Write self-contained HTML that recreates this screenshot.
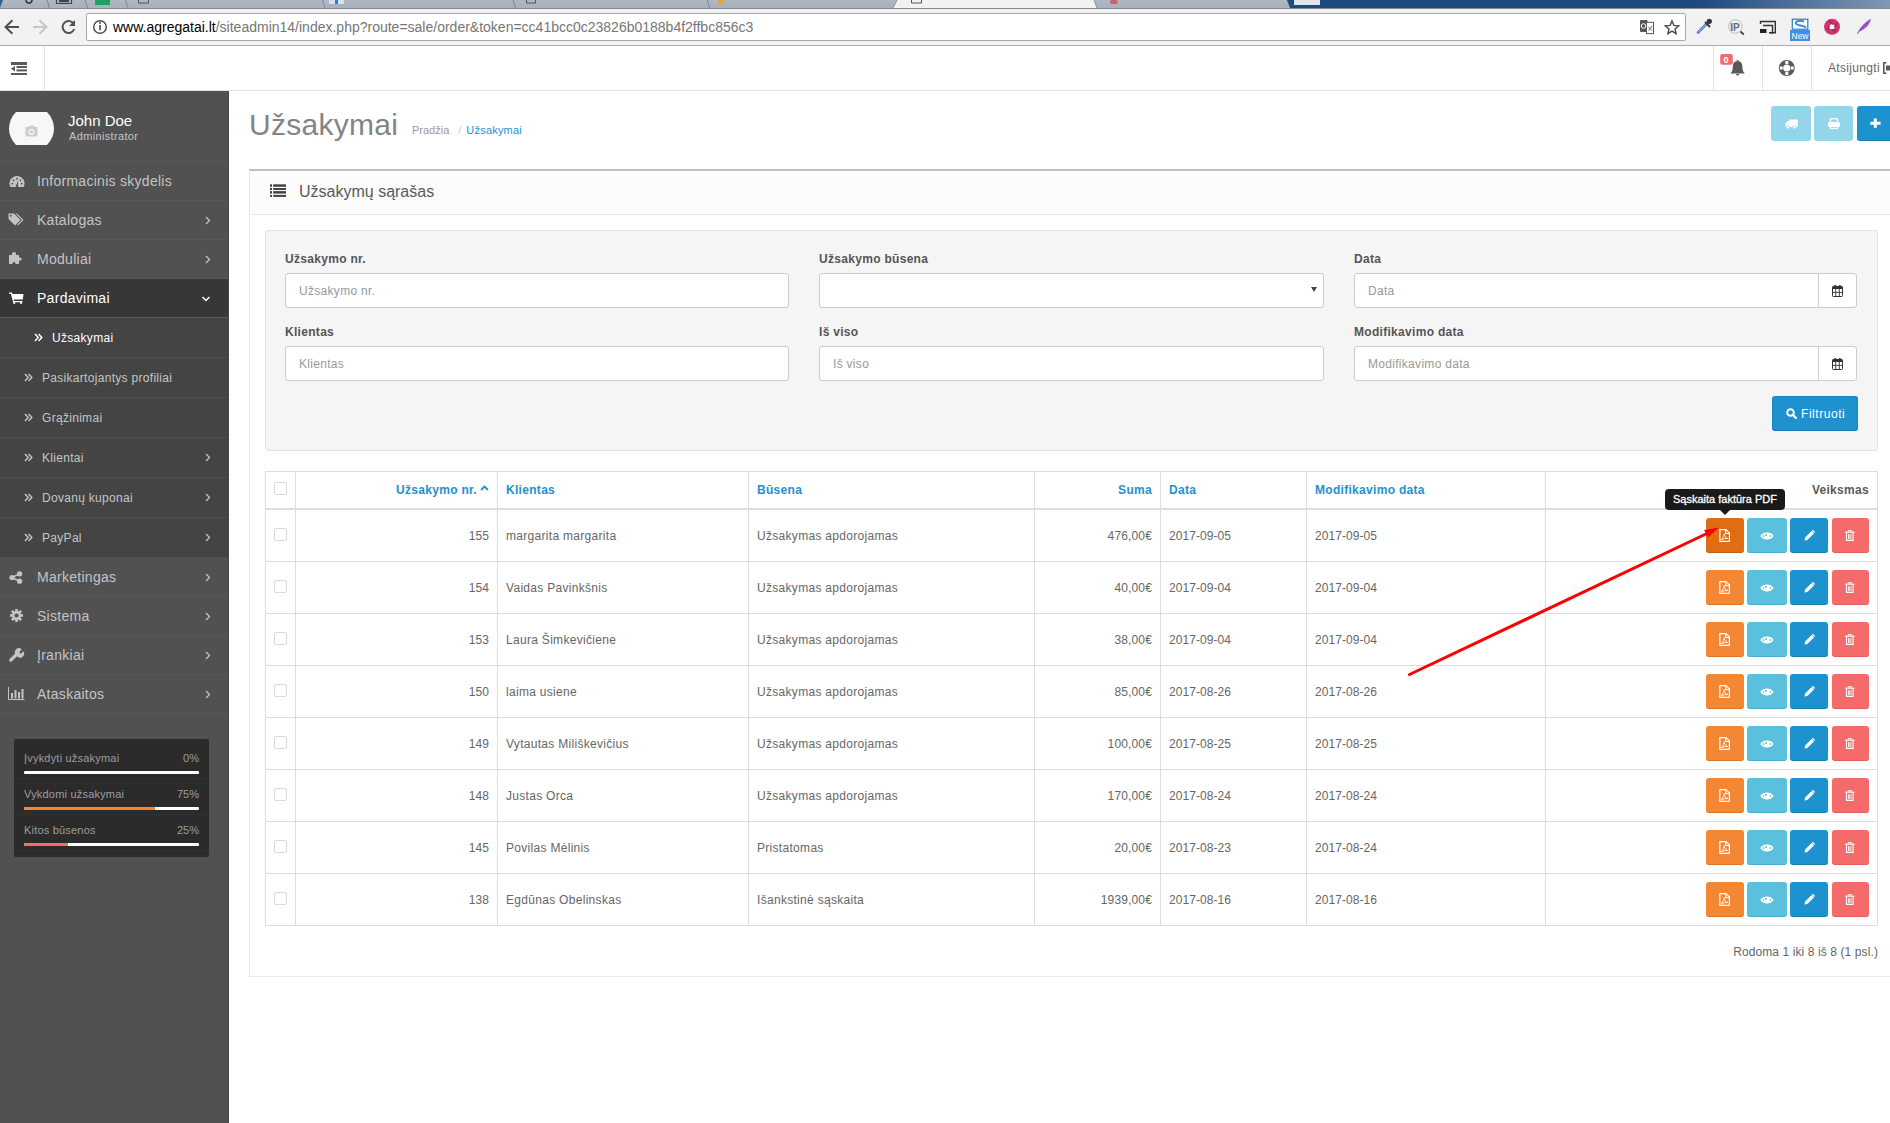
<!DOCTYPE html>
<html><head><meta charset="utf-8">
<style>
*{box-sizing:border-box;margin:0;padding:0}
html,body{width:1890px;height:1123px;overflow:hidden;background:#fff;font-family:"Liberation Sans",sans-serif;color:#666;font-size:12px}
.abs{position:absolute}
svg{display:block;overflow:visible}
.nw{white-space:nowrap}
#side{position:absolute;left:0;top:91px;width:229px;height:1032px;background:#515151}
.mi{position:absolute;left:0;width:229px;height:39px;border-bottom:1px solid #585858;color:#c4c4c4;font-size:14px;letter-spacing:0.28px}
.mi .t{position:absolute;left:37px;top:11px;line-height:17px;white-space:nowrap}
.si{position:absolute;left:0;width:229px;height:40px;background:#444;border-bottom:1px solid #4f4f4f;color:#c4c4c4;font-size:12px;letter-spacing:0.3px}
.si .t{position:absolute;left:42px;top:13px;line-height:15px;white-space:nowrap}
.td{position:absolute;white-space:nowrap;font-size:12px;line-height:14px;color:#666;letter-spacing:0.3px}
.th{position:absolute;white-space:nowrap;font-size:12px;line-height:14px;color:#1e91cf;font-weight:bold;letter-spacing:0.3px}
.lbl{position:absolute;white-space:nowrap;font-size:12px;line-height:14px;font-weight:bold;color:#555;letter-spacing:0.3px}
.inp{position:absolute;height:35px;background:#fff;border:1px solid #ccc;border-radius:3px}
.ph{position:absolute;white-space:nowrap;font-size:12px;line-height:14px;color:#999;letter-spacing:0.3px}
.btn{position:absolute;height:35px;border-radius:3px}
</style></head><body>

<svg class="abs" style="left:0;top:0" width="1890" height="9"><defs><linearGradient id="gr" x1="0" x2="1"><stop offset="0" stop-color="#1d4a80"/><stop offset="1" stop-color="#7f98b4"/></linearGradient></defs><rect x="0" y="0" width="1890" height="8" fill="#a9b2bd"/><rect x="0" y="0" width="1290" height="3" fill="#b3bbc5" opacity="0.6"/><path d="M1287 0 H1890 V8 H1290 Z" fill="#1d4a80"/><rect x="1700" y="0" width="190" height="8" fill="url(#gr)"/><path d="M0 0 H3 L0 8 Z" fill="#3a5f8f"/><path d="M47.0 0 L49.5 8" stroke="#7d8791" stroke-width="1"/><path d="M85.1 0 L87.6 8" stroke="#7d8791" stroke-width="1"/><path d="M125.5 0 L128 8" stroke="#7d8791" stroke-width="1"/><path d="M322.5 0 L325 8" stroke="#7d8791" stroke-width="1"/><path d="M513.0 0 L515.5 8" stroke="#7d8791" stroke-width="1"/><path d="M707.2 0 L709.7 8" stroke="#7d8791" stroke-width="1"/><path d="M897 0 H1094 L1097 8 H893 Z" fill="#f2f2f2"/><path d="M897 0 L893 8 M1094 0 L1097 8" stroke="#8a929b" stroke-width="1"/><rect x="1294" y="0" width="26" height="5" fill="#dfe5ec"/><circle cx="29" cy="0" r="3" fill="none" stroke="#333" stroke-width="1.5"/><path d="M56.5 0 V3.5 H71.5 V0" stroke="#444" stroke-width="1.2" fill="none"/><rect x="59" y="0" width="10" height="2.2" fill="#444"/><rect x="95" y="0" width="15" height="5" fill="#22a060"/><path d="M138.5 0 V3 H148.5 V0" stroke="#555" stroke-width="1" fill="none"/><path d="M526.5 0 V3 H535.5 V0" stroke="#555" stroke-width="1" fill="none"/><path d="M911.5 0 V3 H921.5 V0" stroke="#555" stroke-width="1" fill="none"/><rect x="329" y="0" width="15" height="4" fill="#d8e2ee"/><rect x="335" y="0" width="3" height="4" fill="#2f7fd0"/><rect x="718" y="0" width="6" height="4" rx="2" fill="#f0a030"/><rect x="1110" y="0" width="8" height="4" rx="2" fill="#d04040" opacity="0.7"/></svg>
<div class="abs" style="left:0;top:8px;width:1890px;height:1px;background:#838b95"></div>
<div class="abs" style="left:0;top:9px;width:1890px;height:36px;background:#f2f2f2"></div>
<div class="abs" style="left:0;top:45px;width:1890px;height:1px;background:#ababab"></div>
<div class="abs" style="left:86px;top:13px;width:1600px;height:28px;background:#fff;border:1px solid #a9a9a9;border-radius:2px"></div>
<div class="abs nw" style="left:113px;top:19px;font-size:14px;line-height:17px;color:#000">www.agregatai.lt<span style="color:#767676">/siteadmin14/index.php?route=sale/order&amp;token=cc41bcc0c23826b0188b4f2ffbc856c3</span></div>
<svg class="abs" style="left:0;top:0" width="1890" height="46"><path d="M5.5 27 H19 M12.4 20.3 L5.5 27 L12.4 33.7" stroke="#505050" stroke-width="2" fill="none"/><path d="M33 27 H46.5 M39.5 20.3 L46.5 27 L39.5 33.7" stroke="#c6c6c6" stroke-width="2" fill="none"/><path d="M74 24.5 A6 6 0 1 0 74.2 29" stroke="#505050" stroke-width="2" fill="none"/><path d="M75 20 V26 H69 Z" fill="#505050"/><circle cx="100" cy="27" r="6.3" stroke="#505050" stroke-width="1.5" fill="none"/><rect x="99.2" y="25" width="1.7" height="5.3" fill="#505050"/><circle cx="100" cy="22.9" r="1" fill="#505050"/><rect x="1640" y="20" width="7.5" height="12" rx="1" fill="#555"/><rect x="1646.5" y="22.3" width="7" height="11.3" fill="#fff" stroke="#555" stroke-width="1"/><circle cx="1643.6" cy="26" r="2.3" fill="none" stroke="#fff" stroke-width="1"/><path d="M1648 26.5 L1652 30.5 M1652 26 L1648.5 30.5" stroke="#555" stroke-width="0.9"/><polygon points="1672.00,21.00 1673.88,25.41 1678.66,25.84 1675.04,28.99 1676.11,33.66 1672.00,31.20 1667.89,33.66 1668.96,28.99 1665.34,25.84 1670.12,25.41" fill="none" stroke="#505050" stroke-width="1.5" stroke-linejoin="miter"/><path d="M1698 32.5 L1707 23.5" stroke="#4a6fd8" stroke-width="2.6" stroke-linecap="round"/><path d="M1698 32.5 L1707 23.5" stroke="#d8e0f8" stroke-width="0.8"/><circle cx="1709.3" cy="21.3" r="2.6" fill="#333"/><path d="M1705 22 L1710 27" stroke="#333" stroke-width="1.8"/><circle cx="1735.3" cy="26.4" r="6.7" fill="#f5f5f5" stroke="#c9ced3" stroke-width="1.4"/><text x="1730.3" y="30.5" font-family="Liberation Sans" font-weight="bold" font-size="10" fill="#666">IP</text><path d="M1740.5 31.5 L1743.8 34.5" stroke="#444" stroke-width="1.8"/><path d="M1760.5 24 V21.5 H1775.3 V32.8 H1769" stroke="#333" stroke-width="1.4" fill="none"/><path d="M1763 25.5 H1772.5 V32.8 H1770.5" stroke="#333" stroke-width="1.4" fill="none"/><rect x="1760" y="29" width="6.5" height="4" fill="#222"/><rect x="1792.3" y="19.2" width="15.5" height="10" fill="#fff" stroke="#2f7cc0" stroke-width="1.2"/><path d="M1804 21.5 C1800 20 1795 21 1796 23.5 C1797 26 1803 25 1806 27.5" stroke="#3a8ad0" stroke-width="2" fill="none"/><rect x="1790" y="30" width="20" height="11" fill="#3d8fe8"/><text x="1791.5" y="39" font-family="Liberation Sans" font-size="9" textLength="17" lengthAdjust="spacingAndGlyphs" fill="#fff">New</text><circle cx="1832" cy="26.8" r="8" fill="#d2326e"/><circle cx="1832" cy="26.8" r="2.6" fill="#fff"/><path d="M1829 21 L1833 24.5 M1837 23 L1834.5 27 M1836 31 L1831.5 29.5 M1827.5 29.5 L1829.5 25.5" stroke="#8a1a45" stroke-width="1"/><path d="M1857 34 C1860 27 1865 22 1871 18.7 C1870 24 1866 29 1859 31.5 Z" fill="#9b59d0"/><path d="M1857 34 L1868 22" stroke="#7a3fb8" stroke-width="0.8"/></svg>
<div class="abs" style="left:0;top:46px;width:1890px;height:45px;background:#fff;border-bottom:1px solid #e1e1e1"></div>
<div class="abs" style="left:44px;top:46px;width:1px;height:44px;background:#e1e1e1"></div>
<div class="abs" style="left:1713px;top:46px;width:1px;height:44px;background:#e1e1e1"></div>
<div class="abs" style="left:1762px;top:46px;width:1px;height:44px;background:#e1e1e1"></div>
<div class="abs" style="left:1811px;top:46px;width:1px;height:44px;background:#e1e1e1"></div>
<svg class="abs" style="left:0;top:0" width="1890" height="91"><rect x="11" y="62" width="16" height="3" fill="#595959"/><rect x="16.5" y="66" width="10.5" height="2" fill="#595959"/><rect x="16.5" y="69.4" width="10.5" height="2" fill="#595959"/><rect x="11" y="73" width="16" height="2" fill="#595959"/><path d="M15 66 V71.4 L11 68.7 Z" fill="#595959"/><path d="M1737.6 61 C1734 61 1732.8 64 1732.8 67 C1732.8 70.5 1731.5 72.5 1730.3 73.6 H1744.9 C1743.7 72.5 1742.4 70.5 1742.4 67 C1742.4 64 1741.2 61 1737.6 61 Z" fill="#595959"/><circle cx="1737.6" cy="60.6" r="0.9" fill="#595959"/><path d="M1736 74 A1.6 1.6 0 0 0 1739.2 74 Z" fill="#595959"/><rect x="1720.2" y="54" width="12.6" height="10.8" rx="2" fill="#f56b6b"/><text x="1723.6" y="62.6" font-family="Liberation Sans" font-weight="bold" font-size="9" fill="#fff">0</text><circle cx="1786.8" cy="68" r="5.8" stroke="#595959" stroke-width="4.4" fill="none"/><path d="M1786.8 61.1 V63.9 M1786.8 72.1 V74.9 M1779.9 68 H1782.7 M1790.9 68 H1793.7" stroke="#fff" stroke-width="3"/><path d="M1886.5 62.8 H1883.8 V73.2 H1886.5" stroke="#595959" stroke-width="1.6" fill="none"/><rect x="1886" y="65.5" width="4" height="5" fill="#595959"/></svg>
<div class="abs nw" style="left:1828px;top:61px;font-size:12px;line-height:15px;color:#666;letter-spacing:0.33px">Atsijungti</div>
<div id="side">
<div class="abs" style="left:0;top:0;width:229px;height:71px;border-bottom:1px solid #585858"></div>
<div class="abs" style="left:9px;top:21px;width:45px;height:33px;overflow:hidden"><div style="position:relative;left:0;top:-6px;width:45px;height:45px;border-radius:50%;background:#f7f7f7"></div></div>
<svg class="abs" style="left:25px;top:31.5px" width="13" height="16" viewBox="0 0 13 16"><path d="M0.5 4 H3.5 L4.5 2.5 H8.5 L9.5 4 H12.5 V13.5 H0.5 Z" fill="#cdcdcd"/><circle cx="6.5" cy="8.7" r="3" fill="#f7f7f7"/><circle cx="6.5" cy="8.7" r="1.8" fill="#cdcdcd"/></svg>
<div class="abs nw" style="left:68px;top:21px;font-size:15px;line-height:18px;color:#fff">John Doe</div>
<div class="abs nw" style="left:69px;top:39px;font-size:11px;line-height:13px;color:#c4c4c4;letter-spacing:0.35px">Administrator</div>
<div class="mi" style="top:71px;"><svg class="abs" style="left:9px;top:14px" width="16" height="12" viewBox="0 0 16 12"><path d="M1.37 11 A7.5 7.5 0 1 1 14.63 11 Z" fill="#c4c4c4"/><circle cx="3.3" cy="7.6" r="0.9" fill="#515151"/><circle cx="4.6" cy="4.3" r="0.9" fill="#515151"/><circle cx="8" cy="2.7" r="0.9" fill="#515151"/><circle cx="11.4" cy="4.3" r="0.9" fill="#515151"/><circle cx="12.7" cy="7.6" r="0.9" fill="#515151"/><path d="M7.2 9.8 L9.3 4.2 L8.8 10.2 Z" fill="#515151"/><circle cx="8" cy="9.8" r="1.3" fill="#515151"/></svg><div class="t">Informacinis skydelis</div></div>
<div class="mi" style="top:110px;"><svg class="abs" style="left:8px;top:12px" width="16" height="13" viewBox="0 0 16 13"><path d="M0.5 0.5 H6 L12.5 7 L7 12.5 L0.5 6 Z" fill="#c4c4c4"/><circle cx="2.8" cy="2.8" r="1" fill="#515151"/><path d="M7.5 0.5 H9 L15.5 7 L10 12.5 L9.2 11.7 L13.9 7 Z" fill="#c4c4c4"/></svg><div class="t">Katalogas</div><svg class="abs" style="left:205px;top:15px" width="6" height="9" viewBox="0 0 6 9"><path d="M1 1 L4.5 4.5 L1 8" stroke="#c4c4c4" stroke-width="1.3" fill="none"/></svg></div>
<div class="mi" style="top:149px;"><svg class="abs" style="left:9px;top:12px" width="15" height="12" viewBox="0 0 15 12"><path d="M0 3 H3 V2 A2 2 0 0 1 7 2 V3 H10 V5.5 H11 A1.6 1.6 0 0 1 11 8.7 H10 V12 H6.5 V11 A1.6 1.6 0 0 0 3.5 11 V12 H0 Z" fill="#c4c4c4"/></svg><div class="t">Moduliai</div><svg class="abs" style="left:205px;top:15px" width="6" height="9" viewBox="0 0 6 9"><path d="M1 1 L4.5 4.5 L1 8" stroke="#c4c4c4" stroke-width="1.3" fill="none"/></svg></div>
<div class="mi" style="top:188px;background:#373737;color:#fff;"><svg class="abs" style="left:9px;top:13px" width="15" height="12" viewBox="0 0 15 12"><path d="M0 0.5 H3 L3.6 2 H14.5 L13.8 7.5 H4.6 L5 9 H13.5 V10.2 H4.1 L1.9 1.7 H0 Z" fill="#ffffff"/><circle cx="5.2" cy="11" r="1.1" fill="#ffffff"/><circle cx="12" cy="11" r="1.1" fill="#ffffff"/></svg><div class="t">Pardavimai</div><svg class="abs" style="left:201px;top:17px" width="10" height="6" viewBox="0 0 10 6"><path d="M1.5 1 L5 4.5 L8.5 1" stroke="#fff" stroke-width="1.4" fill="none"/></svg></div>
<div class="si" style="top:227px"><svg class="abs" style="left:34px;top:15px" width="9" height="9" viewBox="0 0 9 9"><path d="M1 1 L4.2 4.5 L1 8 M4.6 1 L7.8 4.5 L4.6 8" stroke="#fff" stroke-width="1.5" fill="none"/></svg><div class="t" style="left:52px;color:#fff">Užsakymai</div></div>
<div class="si" style="top:267px"><svg class="abs" style="left:24px;top:15px" width="9" height="9" viewBox="0 0 9 9"><path d="M1 1 L4.2 4.5 L1 8 M4.6 1 L7.8 4.5 L4.6 8" stroke="#c4c4c4" stroke-width="1.5" fill="none"/></svg><div class="t">Pasikartojantys profiliai</div></div>
<div class="si" style="top:307px"><svg class="abs" style="left:24px;top:15px" width="9" height="9" viewBox="0 0 9 9"><path d="M1 1 L4.2 4.5 L1 8 M4.6 1 L7.8 4.5 L4.6 8" stroke="#c4c4c4" stroke-width="1.5" fill="none"/></svg><div class="t">Grąžinimai</div></div>
<div class="si" style="top:347px"><svg class="abs" style="left:24px;top:15px" width="9" height="9" viewBox="0 0 9 9"><path d="M1 1 L4.2 4.5 L1 8 M4.6 1 L7.8 4.5 L4.6 8" stroke="#c4c4c4" stroke-width="1.5" fill="none"/></svg><div class="t">Klientai</div><svg class="abs" style="left:205px;top:15px" width="6" height="9" viewBox="0 0 6 9"><path d="M1 1 L4.5 4.5 L1 8" stroke="#c4c4c4" stroke-width="1.3" fill="none"/></svg></div>
<div class="si" style="top:387px"><svg class="abs" style="left:24px;top:15px" width="9" height="9" viewBox="0 0 9 9"><path d="M1 1 L4.2 4.5 L1 8 M4.6 1 L7.8 4.5 L4.6 8" stroke="#c4c4c4" stroke-width="1.5" fill="none"/></svg><div class="t">Dovanų kuponai</div><svg class="abs" style="left:205px;top:15px" width="6" height="9" viewBox="0 0 6 9"><path d="M1 1 L4.5 4.5 L1 8" stroke="#c4c4c4" stroke-width="1.3" fill="none"/></svg></div>
<div class="si" style="top:427px"><svg class="abs" style="left:24px;top:15px" width="9" height="9" viewBox="0 0 9 9"><path d="M1 1 L4.2 4.5 L1 8 M4.6 1 L7.8 4.5 L4.6 8" stroke="#c4c4c4" stroke-width="1.5" fill="none"/></svg><div class="t">PayPal</div><svg class="abs" style="left:205px;top:15px" width="6" height="9" viewBox="0 0 6 9"><path d="M1 1 L4.5 4.5 L1 8" stroke="#c4c4c4" stroke-width="1.3" fill="none"/></svg></div>
<div class="mi" style="top:467px;"><svg class="abs" style="left:9px;top:13px" width="14" height="13" viewBox="0 0 14 13"><circle cx="3" cy="6.5" r="2.6" fill="#c4c4c4"/><circle cx="10.6" cy="2.8" r="2.6" fill="#c4c4c4"/><circle cx="10.6" cy="10.2" r="2.6" fill="#c4c4c4"/><path d="M3 6.5 L10.6 2.8 M3 6.5 L10.6 10.2" stroke="#c4c4c4" stroke-width="1.6"/></svg><div class="t">Marketingas</div><svg class="abs" style="left:205px;top:15px" width="6" height="9" viewBox="0 0 6 9"><path d="M1 1 L4.5 4.5 L1 8" stroke="#c4c4c4" stroke-width="1.3" fill="none"/></svg></div>
<div class="mi" style="top:506px;"><svg class="abs" style="left:10px;top:12px" width="13" height="13" viewBox="0 0 13 13"><rect x="5.2" y="0" width="2.6" height="3" fill="#c4c4c4" transform="rotate(0 6.5 6.5)"/><rect x="5.2" y="0" width="2.6" height="3" fill="#c4c4c4" transform="rotate(45 6.5 6.5)"/><rect x="5.2" y="0" width="2.6" height="3" fill="#c4c4c4" transform="rotate(90 6.5 6.5)"/><rect x="5.2" y="0" width="2.6" height="3" fill="#c4c4c4" transform="rotate(135 6.5 6.5)"/><rect x="5.2" y="0" width="2.6" height="3" fill="#c4c4c4" transform="rotate(180 6.5 6.5)"/><rect x="5.2" y="0" width="2.6" height="3" fill="#c4c4c4" transform="rotate(225 6.5 6.5)"/><rect x="5.2" y="0" width="2.6" height="3" fill="#c4c4c4" transform="rotate(270 6.5 6.5)"/><rect x="5.2" y="0" width="2.6" height="3" fill="#c4c4c4" transform="rotate(315 6.5 6.5)"/><circle cx="6.5" cy="6.5" r="4.6" fill="#c4c4c4"/><circle cx="6.5" cy="6.5" r="2" fill="#515151"/></svg><div class="t">Sistema</div><svg class="abs" style="left:205px;top:15px" width="6" height="9" viewBox="0 0 6 9"><path d="M1 1 L4.5 4.5 L1 8" stroke="#c4c4c4" stroke-width="1.3" fill="none"/></svg></div>
<div class="mi" style="top:545px;"><svg class="abs" style="left:9px;top:12px" width="14" height="14" viewBox="0 0 14 14"><path d="M1.8 12.2 L7.5 6.5" stroke="#c4c4c4" stroke-width="3.2" stroke-linecap="round"/><path d="M7 7 A3.8 3.8 0 0 1 12.8 1.5 L10.3 4 L10.8 5.2 L12 5.7 L14 3.2 A3.8 3.8 0 0 1 8.5 8.5 Z" fill="#c4c4c4"/></svg><div class="t">Įrankiai</div><svg class="abs" style="left:205px;top:15px" width="6" height="9" viewBox="0 0 6 9"><path d="M1 1 L4.5 4.5 L1 8" stroke="#c4c4c4" stroke-width="1.3" fill="none"/></svg></div>
<div class="mi" style="top:584px;"><svg class="abs" style="left:8px;top:12px" width="17" height="13" viewBox="0 0 17 13"><path d="M0.5 0 V12.5 H16.5" stroke="#c4c4c4" stroke-width="1" fill="none"/><rect x="3" y="6" width="2" height="5.5" fill="#c4c4c4"/><rect x="6.5" y="3" width="2" height="8.5" fill="#c4c4c4"/><rect x="10" y="5" width="2" height="6.5" fill="#c4c4c4"/><rect x="13.5" y="2" width="2" height="9.5" fill="#c4c4c4"/></svg><div class="t">Ataskaitos</div><svg class="abs" style="left:205px;top:15px" width="6" height="9" viewBox="0 0 6 9"><path d="M1 1 L4.5 4.5 L1 8" stroke="#c4c4c4" stroke-width="1.3" fill="none"/></svg></div>
<div class="abs" style="left:14px;top:648px;width:195px;height:118px;background:#2b2b2b;border-radius:2px"></div>
<div class="abs nw" style="left:24px;top:661px;font-size:11px;line-height:13px;color:#9d9d9d;letter-spacing:0.2px">Įvykdyti užsakymai</div>
<div class="abs nw" style="left:150px;width:49px;text-align:right;top:661px;font-size:11px;line-height:13px;color:#9d9d9d">0%</div>
<div class="abs" style="left:24px;top:680px;width:175px;height:3px;background:#fff;border-radius:1px;overflow:hidden"><div style="width:0%;height:3px;background:#fff"></div></div>
<div class="abs" style="left:14px;top:687px;width:195px;height:0;border-top:1px dotted #3a3a3a"></div>
<div class="abs nw" style="left:24px;top:697px;font-size:11px;line-height:13px;color:#9d9d9d;letter-spacing:0.2px">Vykdomi užsakymai</div>
<div class="abs nw" style="left:150px;width:49px;text-align:right;top:697px;font-size:11px;line-height:13px;color:#9d9d9d">75%</div>
<div class="abs" style="left:24px;top:716px;width:175px;height:3px;background:#fff;border-radius:1px;overflow:hidden"><div style="width:75%;height:3px;background:#f38733"></div></div>
<div class="abs" style="left:14px;top:723px;width:195px;height:0;border-top:1px dotted #3a3a3a"></div>
<div class="abs nw" style="left:24px;top:733px;font-size:11px;line-height:13px;color:#9d9d9d;letter-spacing:0.2px">Kitos būsenos</div>
<div class="abs nw" style="left:150px;width:49px;text-align:right;top:733px;font-size:11px;line-height:13px;color:#9d9d9d">25%</div>
<div class="abs" style="left:24px;top:752px;width:175px;height:3px;background:#fff;border-radius:1px;overflow:hidden"><div style="width:25%;height:3px;background:#f56b6b"></div></div>
<div class="abs" style="left:14px;top:759px;width:195px;height:0;border-top:1px dotted #3a3a3a"></div>
<div class="abs" style="left:228px;top:0;width:1px;height:1032px;background:#484848"></div>
</div>
<div class="abs nw" style="left:249px;top:107px;font-size:30px;line-height:36px;color:#848484;letter-spacing:0.27px">Užsakymai</div>
<div class="abs nw" style="left:412px;top:123px;font-size:11px;line-height:14px;color:#999">Pradžia<span style="color:#ccc;padding:0 5px 0 9px">/</span><span style="color:#1e91cf;letter-spacing:0.2px">Užsakymai</span></div>
<div class="btn" style="left:1771px;top:106px;width:40px;background:#94d6e9"></div>
<div class="btn" style="left:1814px;top:106px;width:39px;background:#94d6e9"></div>
<div class="btn" style="left:1857px;top:106px;width:40px;background:#1e91cf;border-bottom:1px solid #1a7fb5"></div>
<svg class="abs" style="left:0;top:0" width="1890" height="150"><path d="M1789 119.5 H1797.7 V127 H1785.4 V123.8 L1787.5 121 H1789 Z" fill="#fff"/><circle cx="1788" cy="127.3" r="1.7" fill="#fff" stroke="#94d6e9" stroke-width="0.8"/><circle cx="1794.5" cy="127.3" r="1.7" fill="#fff" stroke="#94d6e9" stroke-width="0.8"/><rect x="1830.5" y="118.8" width="7" height="4" fill="none" stroke="#fff" stroke-width="1.3"/><rect x="1828" y="122" width="12" height="5" rx="1.5" fill="#fff"/><rect x="1830.5" y="125.5" width="7" height="3" fill="none" stroke="#fff" stroke-width="1.2"/><path d="M1875.3 118.5 V127.8 M1870.3 123.2 H1880.6" stroke="#fff" stroke-width="3"/></svg>
<div class="abs" style="left:249px;top:169px;width:1700px;height:808px;border:1px solid #e8e8e8;border-top:2px solid #bfbfbf"></div>
<div class="abs" style="left:250px;top:171px;width:1700px;height:44px;background:#fcfcfc;border-bottom:1px solid #e8e8e8"></div>
<svg class="abs" style="left:270px;top:184px" width="17" height="13" viewBox="0 0 17 13"><rect x="0" y="0.3" width="2" height="2.5" fill="#444"/><rect x="3.2" y="0.3" width="12.8" height="2.5" fill="#444"/><rect x="0" y="4" width="2" height="2" fill="#444"/><rect x="3.2" y="4" width="12.8" height="2" fill="#444"/><rect x="0" y="7.1" width="2" height="2.5" fill="#444"/><rect x="3.2" y="7.1" width="12.8" height="2.5" fill="#444"/><rect x="0" y="10.9" width="2" height="2" fill="#444"/><rect x="3.2" y="10.9" width="12.8" height="2" fill="#444"/></svg>
<div class="abs nw" style="left:299px;top:183px;font-size:16px;line-height:18px;color:#595959">Užsakymų sąrašas</div>
<div class="abs" style="left:265px;top:230px;width:1613px;height:221px;background:#f5f5f5;border:1px solid #e3e3e3;border-radius:3px"></div>
<div class="lbl" style="left:285px;top:252px">Užsakymo nr.</div>
<div class="lbl" style="left:819px;top:252px">Užsakymo būsena</div>
<div class="lbl" style="left:1354px;top:252px">Data</div>
<div class="lbl" style="left:285px;top:325px">Klientas</div>
<div class="lbl" style="left:819px;top:325px">Iš viso</div>
<div class="lbl" style="left:1354px;top:325px">Modifikavimo data</div>
<div class="inp" style="left:285px;top:273px;width:504px"></div>
<div class="ph" style="left:299px;top:284px">Užsakymo nr.</div>
<div class="inp" style="left:819px;top:273px;width:505px"></div>
<div class="abs" style="left:1311px;top:287px;width:0;height:0;border-left:3px solid transparent;border-right:3px solid transparent;border-top:5px solid #444"></div>
<div class="inp" style="left:1354px;top:273px;width:503px"></div>
<div class="ph" style="left:1368px;top:284px">Data</div>
<div class="abs" style="left:1818px;top:273px;width:1px;height:35px;background:#ccc"></div>
<svg class="abs" style="left:1832px;top:285px" width="11" height="12" viewBox="0 0 11 12"><rect x="0.5" y="1.5" width="10" height="10" rx="0.8" fill="none" stroke="#333" stroke-width="1"/><rect x="0.5" y="1.5" width="10" height="2.5" fill="#333"/><rect x="2.3" y="0" width="1.6" height="2.5" fill="#333"/><rect x="7.1" y="0" width="1.6" height="2.5" fill="#333"/><path d="M3.7 4 V11 M7.3 4 V11 M0.5 7.4 H10.5" stroke="#333" stroke-width="0.9"/></svg>
<div class="inp" style="left:285px;top:346px;width:504px"></div>
<div class="ph" style="left:299px;top:357px">Klientas</div>
<div class="inp" style="left:819px;top:346px;width:505px"></div>
<div class="ph" style="left:833px;top:357px">Iš viso</div>
<div class="inp" style="left:1354px;top:346px;width:503px"></div>
<div class="ph" style="left:1368px;top:357px">Modifikavimo data</div>
<div class="abs" style="left:1818px;top:346px;width:1px;height:35px;background:#ccc"></div>
<svg class="abs" style="left:1832px;top:358px" width="11" height="12" viewBox="0 0 11 12"><rect x="0.5" y="1.5" width="10" height="10" rx="0.8" fill="none" stroke="#333" stroke-width="1"/><rect x="0.5" y="1.5" width="10" height="2.5" fill="#333"/><rect x="2.3" y="0" width="1.6" height="2.5" fill="#333"/><rect x="7.1" y="0" width="1.6" height="2.5" fill="#333"/><path d="M3.7 4 V11 M7.3 4 V11 M0.5 7.4 H10.5" stroke="#333" stroke-width="0.9"/></svg>
<div class="btn" style="left:1772px;top:396px;width:86px;background:#1e91cf;border:1px solid #1a86c0;border-bottom-color:#1878ad"></div>
<svg class="abs" style="left:1786px;top:408px" width="11" height="11" viewBox="0 0 11 11"><circle cx="4.5" cy="4.5" r="3.3" fill="none" stroke="#fff" stroke-width="1.9"/><path d="M7 7 L10 10" stroke="#fff" stroke-width="2.2" stroke-linecap="round"/></svg>
<div class="abs nw" style="left:1801px;top:407px;font-size:12px;line-height:14px;color:#fff;letter-spacing:0.55px">Filtruoti</div>
<div class="abs" style="left:265px;top:471px;width:1613px;height:455px;border:1px solid #ddd"></div>
<div class="abs" style="left:295px;top:471px;width:1px;height:455px;background:#ddd"></div>
<div class="abs" style="left:497px;top:471px;width:1px;height:455px;background:#ddd"></div>
<div class="abs" style="left:748px;top:471px;width:1px;height:455px;background:#ddd"></div>
<div class="abs" style="left:1034px;top:471px;width:1px;height:455px;background:#ddd"></div>
<div class="abs" style="left:1160px;top:471px;width:1px;height:455px;background:#ddd"></div>
<div class="abs" style="left:1306px;top:471px;width:1px;height:455px;background:#ddd"></div>
<div class="abs" style="left:1545px;top:471px;width:1px;height:455px;background:#ddd"></div>
<div class="abs" style="left:265px;top:508px;width:1613px;height:2px;background:#ddd"></div>
<div class="abs" style="left:265px;top:561px;width:1613px;height:1px;background:#ddd"></div>
<div class="abs" style="left:265px;top:613px;width:1613px;height:1px;background:#ddd"></div>
<div class="abs" style="left:265px;top:665px;width:1613px;height:1px;background:#ddd"></div>
<div class="abs" style="left:265px;top:717px;width:1613px;height:1px;background:#ddd"></div>
<div class="abs" style="left:265px;top:769px;width:1613px;height:1px;background:#ddd"></div>
<div class="abs" style="left:265px;top:821px;width:1613px;height:1px;background:#ddd"></div>
<div class="abs" style="left:265px;top:873px;width:1613px;height:1px;background:#ddd"></div>
<div class="abs" style="left:274px;top:482px;width:13px;height:13px;border:1px solid #d9d9d9;border-radius:2px;background:#fff"></div>
<div class="th" style="right:1413px;top:483px">Užsakymo nr.</div>
<div class="th" style="left:506px;top:483px">Klientas</div>
<div class="th" style="left:757px;top:483px">Būsena</div>
<div class="th" style="right:738px;top:483px">Suma</div>
<div class="th" style="left:1169px;top:483px">Data</div>
<div class="th" style="left:1315px;top:483px">Modifikavimo data</div>
<svg class="abs" style="left:480px;top:485px" width="9" height="6" viewBox="0 0 9 6"><path d="M1 5 L4.5 1.5 L8 5" stroke="#1e91cf" stroke-width="1.8" fill="none"/></svg>
<div class="th" style="right:21px;top:483px;color:#5a5a5a">Veiksmas</div>
<div class="abs" style="left:274px;top:528px;width:13px;height:13px;border:1px solid #d9d9d9;border-radius:2px;background:#fff"></div>
<div class="td" style="right:1401px;top:529px;letter-spacing:0.1px">155</div>
<div class="td" style="left:506px;top:529px">margarita margarita</div>
<div class="td" style="left:757px;top:529px">Užsakymas apdorojamas</div>
<div class="td" style="right:738px;top:529px;letter-spacing:0.15px">476,00€</div>
<div class="td" style="left:1169px;top:529px;letter-spacing:0.05px">2017-09-05</div>
<div class="td" style="left:1315px;top:529px;letter-spacing:0.05px">2017-09-05</div>
<div class="btn" style="left:1706px;top:518px;width:38px;background:#e06d12;border-bottom:1px solid #c85f0c"></div>
<div class="btn" style="left:1747px;top:518px;width:40px;background:#5bc0de;border-bottom:1px solid #46b0d2"></div>
<div class="btn" style="left:1790px;top:518px;width:38px;background:#1e91cf;border-bottom:1px solid #1a7db5"></div>
<div class="btn" style="left:1832px;top:518px;width:37px;background:#f56b6b;border-bottom:1px solid #e65a5a"></div>
<svg class="abs" style="left:1719px;top:529px" width="12" height="13" viewBox="0 0 12 13"><path d="M0.9 0.7 H7 L10.4 4.1 V12.3 H0.9 Z M6.6 0.7 V4.5 H10.4" stroke="#fff" stroke-width="1.2" fill="none"/><path d="M2.3 10.8 C3.8 9 5.2 6.5 5.2 4.8 C5.2 7 6.6 8.8 8.9 9.5 C6.8 9.2 4.4 9.8 2.3 10.8 Z" stroke="#fff" stroke-width="0.9" fill="none"/></svg>
<svg class="abs" style="left:1760px;top:531px" width="14" height="10" viewBox="0 0 14 10"><path d="M0.3 5 C3 0.4 11 0.4 13.7 5 C11 9.6 3 9.6 0.3 5 Z" fill="#fff"/><path d="M2.3 5 C4.5 2.7 9.5 2.7 11.7 5 C9.5 7.3 4.5 7.3 2.3 5 Z" fill="#5bc0de"/><circle cx="7" cy="5" r="3" fill="#fff"/><circle cx="5.9" cy="3.9" r="1" fill="#5bc0de"/></svg>
<svg class="abs" style="left:1804px;top:530px" width="12" height="11" viewBox="0 0 12 11"><path d="M0.5 10.5 L1.1 7.6 L7.6 1.1 L9.9 3.4 L3.4 9.9 Z" fill="#fff"/><path d="M8.4 0.3 L10.7 2.6" stroke="#fff" stroke-width="1.4"/></svg>
<svg class="abs" style="left:1845px;top:530px" width="10" height="11" viewBox="0 0 10 11"><path d="M0 2.2 H9.6" stroke="#fff" stroke-width="1.1"/><path d="M3.3 2.2 V0.6 H6.3 V2.2" stroke="#fff" stroke-width="1" fill="none"/><path d="M1.5 2.6 V10.4 H8.1 V2.6" stroke="#fff" stroke-width="1.1" fill="none"/><path d="M3.5 4.2 V9 M4.8 4.2 V9 M6.1 4.2 V9" stroke="#fff" stroke-width="0.8"/></svg>
<div class="abs" style="left:274px;top:580px;width:13px;height:13px;border:1px solid #d9d9d9;border-radius:2px;background:#fff"></div>
<div class="td" style="right:1401px;top:581px;letter-spacing:0.1px">154</div>
<div class="td" style="left:506px;top:581px">Vaidas Pavinkšnis</div>
<div class="td" style="left:757px;top:581px">Užsakymas apdorojamas</div>
<div class="td" style="right:738px;top:581px;letter-spacing:0.15px">40,00€</div>
<div class="td" style="left:1169px;top:581px;letter-spacing:0.05px">2017-09-04</div>
<div class="td" style="left:1315px;top:581px;letter-spacing:0.05px">2017-09-04</div>
<div class="btn" style="left:1706px;top:570px;width:38px;background:#f38733;border-bottom:1px solid #e0731f"></div>
<div class="btn" style="left:1747px;top:570px;width:40px;background:#5bc0de;border-bottom:1px solid #46b0d2"></div>
<div class="btn" style="left:1790px;top:570px;width:38px;background:#1e91cf;border-bottom:1px solid #1a7db5"></div>
<div class="btn" style="left:1832px;top:570px;width:37px;background:#f56b6b;border-bottom:1px solid #e65a5a"></div>
<svg class="abs" style="left:1719px;top:581px" width="12" height="13" viewBox="0 0 12 13"><path d="M0.9 0.7 H7 L10.4 4.1 V12.3 H0.9 Z M6.6 0.7 V4.5 H10.4" stroke="#fff" stroke-width="1.2" fill="none"/><path d="M2.3 10.8 C3.8 9 5.2 6.5 5.2 4.8 C5.2 7 6.6 8.8 8.9 9.5 C6.8 9.2 4.4 9.8 2.3 10.8 Z" stroke="#fff" stroke-width="0.9" fill="none"/></svg>
<svg class="abs" style="left:1760px;top:583px" width="14" height="10" viewBox="0 0 14 10"><path d="M0.3 5 C3 0.4 11 0.4 13.7 5 C11 9.6 3 9.6 0.3 5 Z" fill="#fff"/><path d="M2.3 5 C4.5 2.7 9.5 2.7 11.7 5 C9.5 7.3 4.5 7.3 2.3 5 Z" fill="#5bc0de"/><circle cx="7" cy="5" r="3" fill="#fff"/><circle cx="5.9" cy="3.9" r="1" fill="#5bc0de"/></svg>
<svg class="abs" style="left:1804px;top:582px" width="12" height="11" viewBox="0 0 12 11"><path d="M0.5 10.5 L1.1 7.6 L7.6 1.1 L9.9 3.4 L3.4 9.9 Z" fill="#fff"/><path d="M8.4 0.3 L10.7 2.6" stroke="#fff" stroke-width="1.4"/></svg>
<svg class="abs" style="left:1845px;top:582px" width="10" height="11" viewBox="0 0 10 11"><path d="M0 2.2 H9.6" stroke="#fff" stroke-width="1.1"/><path d="M3.3 2.2 V0.6 H6.3 V2.2" stroke="#fff" stroke-width="1" fill="none"/><path d="M1.5 2.6 V10.4 H8.1 V2.6" stroke="#fff" stroke-width="1.1" fill="none"/><path d="M3.5 4.2 V9 M4.8 4.2 V9 M6.1 4.2 V9" stroke="#fff" stroke-width="0.8"/></svg>
<div class="abs" style="left:274px;top:632px;width:13px;height:13px;border:1px solid #d9d9d9;border-radius:2px;background:#fff"></div>
<div class="td" style="right:1401px;top:633px;letter-spacing:0.1px">153</div>
<div class="td" style="left:506px;top:633px">Laura Šimkevičiene</div>
<div class="td" style="left:757px;top:633px">Užsakymas apdorojamas</div>
<div class="td" style="right:738px;top:633px;letter-spacing:0.15px">38,00€</div>
<div class="td" style="left:1169px;top:633px;letter-spacing:0.05px">2017-09-04</div>
<div class="td" style="left:1315px;top:633px;letter-spacing:0.05px">2017-09-04</div>
<div class="btn" style="left:1706px;top:622px;width:38px;background:#f38733;border-bottom:1px solid #e0731f"></div>
<div class="btn" style="left:1747px;top:622px;width:40px;background:#5bc0de;border-bottom:1px solid #46b0d2"></div>
<div class="btn" style="left:1790px;top:622px;width:38px;background:#1e91cf;border-bottom:1px solid #1a7db5"></div>
<div class="btn" style="left:1832px;top:622px;width:37px;background:#f56b6b;border-bottom:1px solid #e65a5a"></div>
<svg class="abs" style="left:1719px;top:633px" width="12" height="13" viewBox="0 0 12 13"><path d="M0.9 0.7 H7 L10.4 4.1 V12.3 H0.9 Z M6.6 0.7 V4.5 H10.4" stroke="#fff" stroke-width="1.2" fill="none"/><path d="M2.3 10.8 C3.8 9 5.2 6.5 5.2 4.8 C5.2 7 6.6 8.8 8.9 9.5 C6.8 9.2 4.4 9.8 2.3 10.8 Z" stroke="#fff" stroke-width="0.9" fill="none"/></svg>
<svg class="abs" style="left:1760px;top:635px" width="14" height="10" viewBox="0 0 14 10"><path d="M0.3 5 C3 0.4 11 0.4 13.7 5 C11 9.6 3 9.6 0.3 5 Z" fill="#fff"/><path d="M2.3 5 C4.5 2.7 9.5 2.7 11.7 5 C9.5 7.3 4.5 7.3 2.3 5 Z" fill="#5bc0de"/><circle cx="7" cy="5" r="3" fill="#fff"/><circle cx="5.9" cy="3.9" r="1" fill="#5bc0de"/></svg>
<svg class="abs" style="left:1804px;top:634px" width="12" height="11" viewBox="0 0 12 11"><path d="M0.5 10.5 L1.1 7.6 L7.6 1.1 L9.9 3.4 L3.4 9.9 Z" fill="#fff"/><path d="M8.4 0.3 L10.7 2.6" stroke="#fff" stroke-width="1.4"/></svg>
<svg class="abs" style="left:1845px;top:634px" width="10" height="11" viewBox="0 0 10 11"><path d="M0 2.2 H9.6" stroke="#fff" stroke-width="1.1"/><path d="M3.3 2.2 V0.6 H6.3 V2.2" stroke="#fff" stroke-width="1" fill="none"/><path d="M1.5 2.6 V10.4 H8.1 V2.6" stroke="#fff" stroke-width="1.1" fill="none"/><path d="M3.5 4.2 V9 M4.8 4.2 V9 M6.1 4.2 V9" stroke="#fff" stroke-width="0.8"/></svg>
<div class="abs" style="left:274px;top:684px;width:13px;height:13px;border:1px solid #d9d9d9;border-radius:2px;background:#fff"></div>
<div class="td" style="right:1401px;top:685px;letter-spacing:0.1px">150</div>
<div class="td" style="left:506px;top:685px">laima usiene</div>
<div class="td" style="left:757px;top:685px">Užsakymas apdorojamas</div>
<div class="td" style="right:738px;top:685px;letter-spacing:0.15px">85,00€</div>
<div class="td" style="left:1169px;top:685px;letter-spacing:0.05px">2017-08-26</div>
<div class="td" style="left:1315px;top:685px;letter-spacing:0.05px">2017-08-26</div>
<div class="btn" style="left:1706px;top:674px;width:38px;background:#f38733;border-bottom:1px solid #e0731f"></div>
<div class="btn" style="left:1747px;top:674px;width:40px;background:#5bc0de;border-bottom:1px solid #46b0d2"></div>
<div class="btn" style="left:1790px;top:674px;width:38px;background:#1e91cf;border-bottom:1px solid #1a7db5"></div>
<div class="btn" style="left:1832px;top:674px;width:37px;background:#f56b6b;border-bottom:1px solid #e65a5a"></div>
<svg class="abs" style="left:1719px;top:685px" width="12" height="13" viewBox="0 0 12 13"><path d="M0.9 0.7 H7 L10.4 4.1 V12.3 H0.9 Z M6.6 0.7 V4.5 H10.4" stroke="#fff" stroke-width="1.2" fill="none"/><path d="M2.3 10.8 C3.8 9 5.2 6.5 5.2 4.8 C5.2 7 6.6 8.8 8.9 9.5 C6.8 9.2 4.4 9.8 2.3 10.8 Z" stroke="#fff" stroke-width="0.9" fill="none"/></svg>
<svg class="abs" style="left:1760px;top:687px" width="14" height="10" viewBox="0 0 14 10"><path d="M0.3 5 C3 0.4 11 0.4 13.7 5 C11 9.6 3 9.6 0.3 5 Z" fill="#fff"/><path d="M2.3 5 C4.5 2.7 9.5 2.7 11.7 5 C9.5 7.3 4.5 7.3 2.3 5 Z" fill="#5bc0de"/><circle cx="7" cy="5" r="3" fill="#fff"/><circle cx="5.9" cy="3.9" r="1" fill="#5bc0de"/></svg>
<svg class="abs" style="left:1804px;top:686px" width="12" height="11" viewBox="0 0 12 11"><path d="M0.5 10.5 L1.1 7.6 L7.6 1.1 L9.9 3.4 L3.4 9.9 Z" fill="#fff"/><path d="M8.4 0.3 L10.7 2.6" stroke="#fff" stroke-width="1.4"/></svg>
<svg class="abs" style="left:1845px;top:686px" width="10" height="11" viewBox="0 0 10 11"><path d="M0 2.2 H9.6" stroke="#fff" stroke-width="1.1"/><path d="M3.3 2.2 V0.6 H6.3 V2.2" stroke="#fff" stroke-width="1" fill="none"/><path d="M1.5 2.6 V10.4 H8.1 V2.6" stroke="#fff" stroke-width="1.1" fill="none"/><path d="M3.5 4.2 V9 M4.8 4.2 V9 M6.1 4.2 V9" stroke="#fff" stroke-width="0.8"/></svg>
<div class="abs" style="left:274px;top:736px;width:13px;height:13px;border:1px solid #d9d9d9;border-radius:2px;background:#fff"></div>
<div class="td" style="right:1401px;top:737px;letter-spacing:0.1px">149</div>
<div class="td" style="left:506px;top:737px">Vytautas Miliškevičius</div>
<div class="td" style="left:757px;top:737px">Užsakymas apdorojamas</div>
<div class="td" style="right:738px;top:737px;letter-spacing:0.15px">100,00€</div>
<div class="td" style="left:1169px;top:737px;letter-spacing:0.05px">2017-08-25</div>
<div class="td" style="left:1315px;top:737px;letter-spacing:0.05px">2017-08-25</div>
<div class="btn" style="left:1706px;top:726px;width:38px;background:#f38733;border-bottom:1px solid #e0731f"></div>
<div class="btn" style="left:1747px;top:726px;width:40px;background:#5bc0de;border-bottom:1px solid #46b0d2"></div>
<div class="btn" style="left:1790px;top:726px;width:38px;background:#1e91cf;border-bottom:1px solid #1a7db5"></div>
<div class="btn" style="left:1832px;top:726px;width:37px;background:#f56b6b;border-bottom:1px solid #e65a5a"></div>
<svg class="abs" style="left:1719px;top:737px" width="12" height="13" viewBox="0 0 12 13"><path d="M0.9 0.7 H7 L10.4 4.1 V12.3 H0.9 Z M6.6 0.7 V4.5 H10.4" stroke="#fff" stroke-width="1.2" fill="none"/><path d="M2.3 10.8 C3.8 9 5.2 6.5 5.2 4.8 C5.2 7 6.6 8.8 8.9 9.5 C6.8 9.2 4.4 9.8 2.3 10.8 Z" stroke="#fff" stroke-width="0.9" fill="none"/></svg>
<svg class="abs" style="left:1760px;top:739px" width="14" height="10" viewBox="0 0 14 10"><path d="M0.3 5 C3 0.4 11 0.4 13.7 5 C11 9.6 3 9.6 0.3 5 Z" fill="#fff"/><path d="M2.3 5 C4.5 2.7 9.5 2.7 11.7 5 C9.5 7.3 4.5 7.3 2.3 5 Z" fill="#5bc0de"/><circle cx="7" cy="5" r="3" fill="#fff"/><circle cx="5.9" cy="3.9" r="1" fill="#5bc0de"/></svg>
<svg class="abs" style="left:1804px;top:738px" width="12" height="11" viewBox="0 0 12 11"><path d="M0.5 10.5 L1.1 7.6 L7.6 1.1 L9.9 3.4 L3.4 9.9 Z" fill="#fff"/><path d="M8.4 0.3 L10.7 2.6" stroke="#fff" stroke-width="1.4"/></svg>
<svg class="abs" style="left:1845px;top:738px" width="10" height="11" viewBox="0 0 10 11"><path d="M0 2.2 H9.6" stroke="#fff" stroke-width="1.1"/><path d="M3.3 2.2 V0.6 H6.3 V2.2" stroke="#fff" stroke-width="1" fill="none"/><path d="M1.5 2.6 V10.4 H8.1 V2.6" stroke="#fff" stroke-width="1.1" fill="none"/><path d="M3.5 4.2 V9 M4.8 4.2 V9 M6.1 4.2 V9" stroke="#fff" stroke-width="0.8"/></svg>
<div class="abs" style="left:274px;top:788px;width:13px;height:13px;border:1px solid #d9d9d9;border-radius:2px;background:#fff"></div>
<div class="td" style="right:1401px;top:789px;letter-spacing:0.1px">148</div>
<div class="td" style="left:506px;top:789px">Justas Orca</div>
<div class="td" style="left:757px;top:789px">Užsakymas apdorojamas</div>
<div class="td" style="right:738px;top:789px;letter-spacing:0.15px">170,00€</div>
<div class="td" style="left:1169px;top:789px;letter-spacing:0.05px">2017-08-24</div>
<div class="td" style="left:1315px;top:789px;letter-spacing:0.05px">2017-08-24</div>
<div class="btn" style="left:1706px;top:778px;width:38px;background:#f38733;border-bottom:1px solid #e0731f"></div>
<div class="btn" style="left:1747px;top:778px;width:40px;background:#5bc0de;border-bottom:1px solid #46b0d2"></div>
<div class="btn" style="left:1790px;top:778px;width:38px;background:#1e91cf;border-bottom:1px solid #1a7db5"></div>
<div class="btn" style="left:1832px;top:778px;width:37px;background:#f56b6b;border-bottom:1px solid #e65a5a"></div>
<svg class="abs" style="left:1719px;top:789px" width="12" height="13" viewBox="0 0 12 13"><path d="M0.9 0.7 H7 L10.4 4.1 V12.3 H0.9 Z M6.6 0.7 V4.5 H10.4" stroke="#fff" stroke-width="1.2" fill="none"/><path d="M2.3 10.8 C3.8 9 5.2 6.5 5.2 4.8 C5.2 7 6.6 8.8 8.9 9.5 C6.8 9.2 4.4 9.8 2.3 10.8 Z" stroke="#fff" stroke-width="0.9" fill="none"/></svg>
<svg class="abs" style="left:1760px;top:791px" width="14" height="10" viewBox="0 0 14 10"><path d="M0.3 5 C3 0.4 11 0.4 13.7 5 C11 9.6 3 9.6 0.3 5 Z" fill="#fff"/><path d="M2.3 5 C4.5 2.7 9.5 2.7 11.7 5 C9.5 7.3 4.5 7.3 2.3 5 Z" fill="#5bc0de"/><circle cx="7" cy="5" r="3" fill="#fff"/><circle cx="5.9" cy="3.9" r="1" fill="#5bc0de"/></svg>
<svg class="abs" style="left:1804px;top:790px" width="12" height="11" viewBox="0 0 12 11"><path d="M0.5 10.5 L1.1 7.6 L7.6 1.1 L9.9 3.4 L3.4 9.9 Z" fill="#fff"/><path d="M8.4 0.3 L10.7 2.6" stroke="#fff" stroke-width="1.4"/></svg>
<svg class="abs" style="left:1845px;top:790px" width="10" height="11" viewBox="0 0 10 11"><path d="M0 2.2 H9.6" stroke="#fff" stroke-width="1.1"/><path d="M3.3 2.2 V0.6 H6.3 V2.2" stroke="#fff" stroke-width="1" fill="none"/><path d="M1.5 2.6 V10.4 H8.1 V2.6" stroke="#fff" stroke-width="1.1" fill="none"/><path d="M3.5 4.2 V9 M4.8 4.2 V9 M6.1 4.2 V9" stroke="#fff" stroke-width="0.8"/></svg>
<div class="abs" style="left:274px;top:840px;width:13px;height:13px;border:1px solid #d9d9d9;border-radius:2px;background:#fff"></div>
<div class="td" style="right:1401px;top:841px;letter-spacing:0.1px">145</div>
<div class="td" style="left:506px;top:841px">Povilas Mėlinis</div>
<div class="td" style="left:757px;top:841px">Pristatomas</div>
<div class="td" style="right:738px;top:841px;letter-spacing:0.15px">20,00€</div>
<div class="td" style="left:1169px;top:841px;letter-spacing:0.05px">2017-08-23</div>
<div class="td" style="left:1315px;top:841px;letter-spacing:0.05px">2017-08-24</div>
<div class="btn" style="left:1706px;top:830px;width:38px;background:#f38733;border-bottom:1px solid #e0731f"></div>
<div class="btn" style="left:1747px;top:830px;width:40px;background:#5bc0de;border-bottom:1px solid #46b0d2"></div>
<div class="btn" style="left:1790px;top:830px;width:38px;background:#1e91cf;border-bottom:1px solid #1a7db5"></div>
<div class="btn" style="left:1832px;top:830px;width:37px;background:#f56b6b;border-bottom:1px solid #e65a5a"></div>
<svg class="abs" style="left:1719px;top:841px" width="12" height="13" viewBox="0 0 12 13"><path d="M0.9 0.7 H7 L10.4 4.1 V12.3 H0.9 Z M6.6 0.7 V4.5 H10.4" stroke="#fff" stroke-width="1.2" fill="none"/><path d="M2.3 10.8 C3.8 9 5.2 6.5 5.2 4.8 C5.2 7 6.6 8.8 8.9 9.5 C6.8 9.2 4.4 9.8 2.3 10.8 Z" stroke="#fff" stroke-width="0.9" fill="none"/></svg>
<svg class="abs" style="left:1760px;top:843px" width="14" height="10" viewBox="0 0 14 10"><path d="M0.3 5 C3 0.4 11 0.4 13.7 5 C11 9.6 3 9.6 0.3 5 Z" fill="#fff"/><path d="M2.3 5 C4.5 2.7 9.5 2.7 11.7 5 C9.5 7.3 4.5 7.3 2.3 5 Z" fill="#5bc0de"/><circle cx="7" cy="5" r="3" fill="#fff"/><circle cx="5.9" cy="3.9" r="1" fill="#5bc0de"/></svg>
<svg class="abs" style="left:1804px;top:842px" width="12" height="11" viewBox="0 0 12 11"><path d="M0.5 10.5 L1.1 7.6 L7.6 1.1 L9.9 3.4 L3.4 9.9 Z" fill="#fff"/><path d="M8.4 0.3 L10.7 2.6" stroke="#fff" stroke-width="1.4"/></svg>
<svg class="abs" style="left:1845px;top:842px" width="10" height="11" viewBox="0 0 10 11"><path d="M0 2.2 H9.6" stroke="#fff" stroke-width="1.1"/><path d="M3.3 2.2 V0.6 H6.3 V2.2" stroke="#fff" stroke-width="1" fill="none"/><path d="M1.5 2.6 V10.4 H8.1 V2.6" stroke="#fff" stroke-width="1.1" fill="none"/><path d="M3.5 4.2 V9 M4.8 4.2 V9 M6.1 4.2 V9" stroke="#fff" stroke-width="0.8"/></svg>
<div class="abs" style="left:274px;top:892px;width:13px;height:13px;border:1px solid #d9d9d9;border-radius:2px;background:#fff"></div>
<div class="td" style="right:1401px;top:893px;letter-spacing:0.1px">138</div>
<div class="td" style="left:506px;top:893px">Egdūnas Obelinskas</div>
<div class="td" style="left:757px;top:893px">Išankstinė sąskaita</div>
<div class="td" style="right:738px;top:893px;letter-spacing:0.15px">1939,00€</div>
<div class="td" style="left:1169px;top:893px;letter-spacing:0.05px">2017-08-16</div>
<div class="td" style="left:1315px;top:893px;letter-spacing:0.05px">2017-08-16</div>
<div class="btn" style="left:1706px;top:882px;width:38px;background:#f38733;border-bottom:1px solid #e0731f"></div>
<div class="btn" style="left:1747px;top:882px;width:40px;background:#5bc0de;border-bottom:1px solid #46b0d2"></div>
<div class="btn" style="left:1790px;top:882px;width:38px;background:#1e91cf;border-bottom:1px solid #1a7db5"></div>
<div class="btn" style="left:1832px;top:882px;width:37px;background:#f56b6b;border-bottom:1px solid #e65a5a"></div>
<svg class="abs" style="left:1719px;top:893px" width="12" height="13" viewBox="0 0 12 13"><path d="M0.9 0.7 H7 L10.4 4.1 V12.3 H0.9 Z M6.6 0.7 V4.5 H10.4" stroke="#fff" stroke-width="1.2" fill="none"/><path d="M2.3 10.8 C3.8 9 5.2 6.5 5.2 4.8 C5.2 7 6.6 8.8 8.9 9.5 C6.8 9.2 4.4 9.8 2.3 10.8 Z" stroke="#fff" stroke-width="0.9" fill="none"/></svg>
<svg class="abs" style="left:1760px;top:895px" width="14" height="10" viewBox="0 0 14 10"><path d="M0.3 5 C3 0.4 11 0.4 13.7 5 C11 9.6 3 9.6 0.3 5 Z" fill="#fff"/><path d="M2.3 5 C4.5 2.7 9.5 2.7 11.7 5 C9.5 7.3 4.5 7.3 2.3 5 Z" fill="#5bc0de"/><circle cx="7" cy="5" r="3" fill="#fff"/><circle cx="5.9" cy="3.9" r="1" fill="#5bc0de"/></svg>
<svg class="abs" style="left:1804px;top:894px" width="12" height="11" viewBox="0 0 12 11"><path d="M0.5 10.5 L1.1 7.6 L7.6 1.1 L9.9 3.4 L3.4 9.9 Z" fill="#fff"/><path d="M8.4 0.3 L10.7 2.6" stroke="#fff" stroke-width="1.4"/></svg>
<svg class="abs" style="left:1845px;top:894px" width="10" height="11" viewBox="0 0 10 11"><path d="M0 2.2 H9.6" stroke="#fff" stroke-width="1.1"/><path d="M3.3 2.2 V0.6 H6.3 V2.2" stroke="#fff" stroke-width="1" fill="none"/><path d="M1.5 2.6 V10.4 H8.1 V2.6" stroke="#fff" stroke-width="1.1" fill="none"/><path d="M3.5 4.2 V9 M4.8 4.2 V9 M6.1 4.2 V9" stroke="#fff" stroke-width="0.8"/></svg>
<div class="abs nw" style="right:12px;top:945px;font-size:12px;line-height:14px;color:#666;letter-spacing:0.1px">Rodoma 1 iki 8 iš 8 (1 psl.)</div>
<div class="abs" style="left:1665px;top:489px;width:120px;height:21px;background:#1a1a1a;border-radius:4px"></div>
<div class="abs" style="left:1719px;top:509px;width:0;height:0;border-left:6px solid transparent;border-right:6px solid transparent;border-top:6px solid #1a1a1a"></div>
<div class="abs nw" style="left:1673px;top:492px;font-size:11px;line-height:14px;color:#fff;-webkit-text-stroke:0.3px #fff">Sąskaita faktūra PDF</div>
<svg class="abs" style="left:0;top:0" width="1890" height="1123"><path d="M1409.5 674.5 L1708 533" stroke="#ff0000" stroke-width="3" stroke-linecap="round"/><path d="M1719 527.5 L1704 530 L1708 537.5 Z" fill="#ff0000"/></svg>
</body></html>
